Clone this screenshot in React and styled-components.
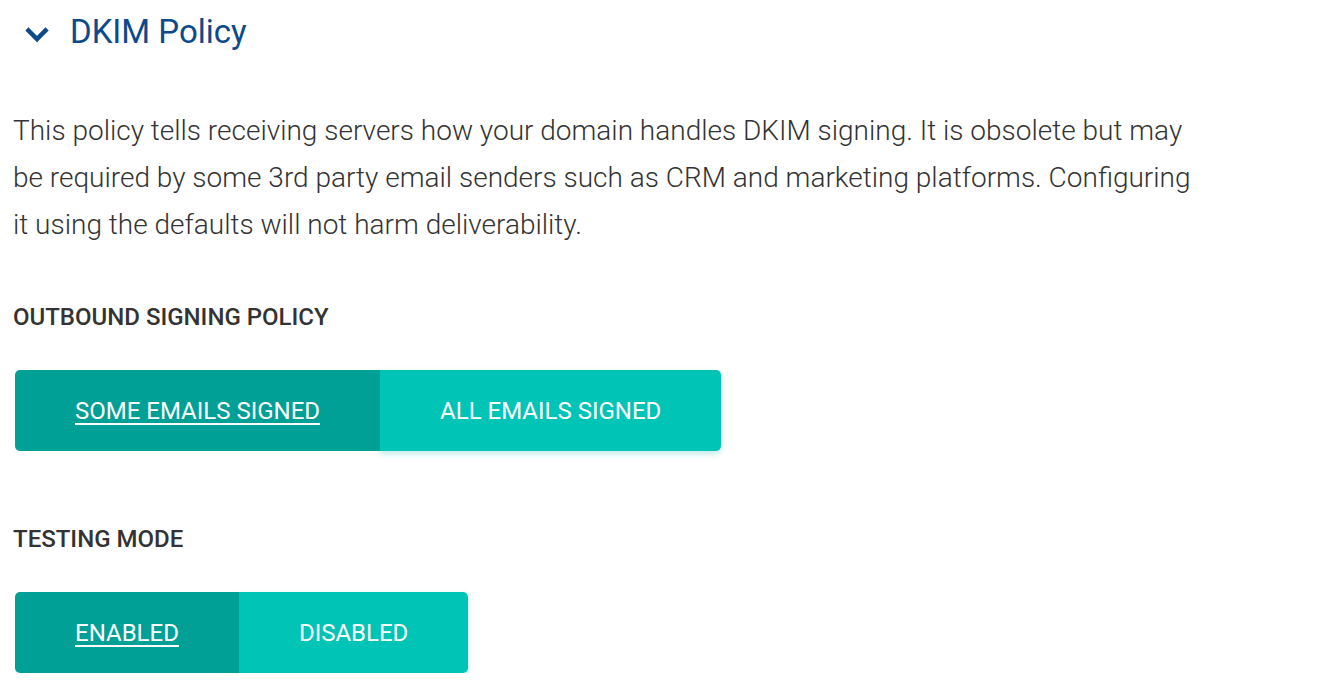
import styled, { createGlobalStyle } from "styled-components";

const GlobalStyle = createGlobalStyle`
  body {
    margin: 0;
    background: #ffffff;
    font-family: Roboto, "Liberation Sans", Arial, sans-serif;
  }
`;

const Page = styled.div`
  padding: 12px 0 0 14px;
`;

const Header = styled.div`
  display: flex;
  align-items: center;
  gap: 21px;
  padding-left: 11px;
  color: #0c4a8a;
  font-size: 33px;
  line-height: 40px;
  font-weight: 400;
`;

const Chevron = styled.svg`
  width: 24px;
  height: 16px;
  margin-top: 5px;
`;

const Description = styled.p`
  margin: 55px 0 0 -1px;
  width: 1192px;
  font-size: 28px;
  line-height: 47px;
  font-weight: 300;
  color: #333333;
`;

const Field = styled.div`
  margin-top: ${(p) => p.$top}px;
`;

const Label = styled.div`
  margin-left: -1px;
  font-size: 24px;
  line-height: 28px;
  font-weight: 500;
  color: #333333;
  text-transform: uppercase;
`;

const Toggle = styled.div`
  display: inline-flex;
  margin-top: 39px;
  margin-left: 1px;
`;

const Option = styled.button`
  display: flex;
  align-items: center;
  height: 81px;
  padding: 0 60px;
  border: none;
  font-family: inherit;
  font-size: 24px;
  font-weight: 400;
  color: #ffffff;
  text-transform: uppercase;
  cursor: pointer;
  background: ${(p) => (p.$active ? "#00a096" : "#00c4b5")};
  text-decoration: ${(p) => (p.$active ? "underline" : "none")};
  text-decoration-thickness: 2px;
  text-underline-offset: 4px;
  box-shadow: ${(p) => (p.$active ? "none" : "0 3px 6px rgba(0, 170, 160, 0.25)")};

  &:first-child {
    border-radius: 5px 0 0 5px;
  }
  &:last-child {
    border-radius: 0 5px 5px 0;
  }
`;

const ToggleGroup = ({ options, value }) => (
  <Toggle>
    {options.map((o) => (
      <Option key={o} $active={o === value}>
        {o}
      </Option>
    ))}
  </Toggle>
);

const App = () => (
  <>
    <GlobalStyle />
    <Page>
      <Header>
        <Chevron viewBox="0 0 24 16">
          <polyline
            points="3.5,3.5 12,12 20.5,3.5"
            fill="none"
            stroke="#0c4a8a"
            strokeWidth="4.5"
            strokeLinecap="square"
            strokeLinejoin="miter"
          />
        </Chevron>
        DKIM Policy
      </Header>
      <Description>
        This policy tells receiving servers how your domain handles DKIM signing. It is obsolete but may
        be required by some 3rd party email senders such as CRM and marketing platforms. Configuring
        it using the defaults will not harm deliverability.
      </Description>
      <Field $top={55}>
        <Label>Outbound Signing Policy</Label>
        <ToggleGroup
          options={["Some emails signed", "All emails signed"]}
          value="Some emails signed"
        />
      </Field>
      <Field $top={74}>
        <Label>Testing Mode</Label>
        <ToggleGroup options={["Enabled", "Disabled"]} value="Enabled" />
      </Field>
    </Page>
  </>
);

export default App;
